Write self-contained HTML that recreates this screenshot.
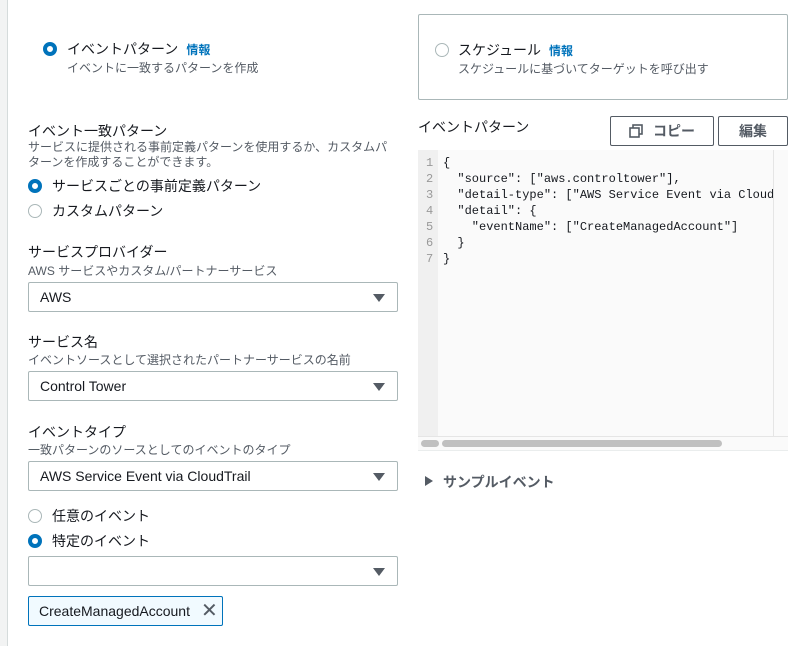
<!DOCTYPE html>
<html><head><meta charset="utf-8"><style>
body{margin:0;width:795px;height:646px;background:#fff;position:relative;overflow:hidden;font-family:"Liberation Sans","Noto Sans CJK JP",sans-serif;color:#16191f;}
.a{position:absolute;white-space:nowrap}
.t{font-size:14px}
.s{font-size:12px;color:#545b64}
.info{color:#0073bb;font-size:12px;font-weight:bold;margin-left:8px}
.rad{position:absolute;width:14px;height:14px;border-radius:50%;box-sizing:border-box}
.on{border:4px solid #0073bb;background:#fff}
.off{border:1px solid #aab7b8;background:#fff}
.sel{position:absolute;left:28px;width:370px;height:30px;border:1px solid #aab7b8;box-sizing:border-box;border-radius:2px;font-size:14px;line-height:28px;padding-left:11px}
.arr{position:absolute;right:12px;top:11px;width:0;height:0;border-left:6px solid transparent;border-right:6px solid transparent;border-top:8px solid #545b64}
.btn{position:absolute;top:116px;height:30px;border:1px solid #545b64;box-sizing:border-box;border-radius:2px;font-size:14px;font-weight:bold;color:#545b64;line-height:28px;text-align:center}
.code{font-family:"Liberation Mono",monospace;font-size:12px;line-height:16px;color:#16191f}
</style></head><body>
<div class="a" style="left:0;top:0;width:7px;height:646px;background:#f2f3f3;border-right:1px solid #d5dbdb"></div>

<div class="rad on" style="left:43px;top:42px"></div>
<div class="a t" style="left:67px;top:39px">イベントパターン<span class="info">情報</span></div>
<div class="a s" style="left:67px;top:59px">イベントに一致するパターンを作成</div>

<div class="a" style="left:418px;top:14px;width:370px;height:86px;border:1px solid #aab7b8;box-sizing:border-box;border-radius:2px"></div>
<div class="rad off" style="left:435px;top:43px"></div>
<div class="a t" style="left:458px;top:40px">スケジュール<span class="info">情報</span></div>
<div class="a s" style="left:458px;top:60px">スケジュールに基づいてターゲットを呼び出す</div>

<div class="a t" style="left:28px;top:121px">イベント一致パターン</div>
<div class="a s" style="left:28px;top:140px;line-height:15px">サービスに提供される事前定義パターンを使用するか、カスタムパ<br>ターンを作成することができます。</div>
<div class="rad on" style="left:28px;top:179px"></div>
<div class="a t" style="left:52px;top:176px">サービスごとの事前定義パターン</div>
<div class="rad off" style="left:28px;top:204px"></div>
<div class="a t" style="left:52px;top:201px">カスタムパターン</div>

<div class="a t" style="left:28px;top:242px">サービスプロバイダー</div>
<div class="a s" style="left:28px;top:262px">AWS サービスやカスタム/パートナーサービス</div>
<div class="sel" style="top:282px">AWS<div class="arr"></div></div>

<div class="a t" style="left:28px;top:332px">サービス名</div>
<div class="a s" style="left:28px;top:351px">イベントソースとして選択されたパートナーサービスの名前</div>
<div class="sel" style="top:371px">Control Tower<div class="arr"></div></div>

<div class="a t" style="left:28px;top:422px">イベントタイプ</div>
<div class="a s" style="left:28px;top:441px">一致パターンのソースとしてのイベントのタイプ</div>
<div class="sel" style="top:461px">AWS Service Event via CloudTrail<div class="arr"></div></div>

<div class="rad off" style="left:28px;top:509px"></div>
<div class="a t" style="left:52px;top:506px">任意のイベント</div>
<div class="rad on" style="left:28px;top:534px"></div>
<div class="a t" style="left:52px;top:531px">特定のイベント</div>
<div class="sel" style="top:556px"><div class="arr"></div></div>
<div class="a" style="left:28px;top:596px;width:195px;height:30px;border:1px solid #0073bb;box-sizing:border-box;border-radius:2px;background:#f1faff;font-size:14px;line-height:28px;padding-left:10px">CreateManagedAccount<span style="position:absolute;left:172px;top:0;font-size:20px;color:#545b64">✕</span></div>

<div class="a t" style="left:418px;top:117px">イベントパターン</div>
<div class="btn" style="left:610px;width:104px"><svg width="14" height="14" viewBox="0 0 14 14" style="position:relative;top:2px;margin-right:10px"><rect x="4" y="1" width="9" height="9" fill="none" stroke="#545b64" stroke-width="1.6"/><rect x="1" y="4" width="9" height="9" fill="#fff" stroke="#545b64" stroke-width="1.6"/></svg>コピー</div>
<div class="btn" style="left:718px;width:70px">編集</div>

<div class="a" style="left:418px;top:150px;width:370px;height:300px;background:#fafafa;border-bottom:1px solid #eaeded"></div>
<div class="a" style="left:418px;top:150px;width:20px;height:286px;background:#f0f0f0"></div>
<div class="a" style="left:773px;top:150px;width:1px;height:286px;background:#e5e5e5"></div>
<div class="a" style="left:418px;top:436px;width:370px;height:1px;background:#e5e5e5"></div>
<div class="a" style="left:421px;top:440px;width:18px;height:7px;border-radius:4px;background:#c0c0c0"></div>
<div class="a" style="left:442px;top:440px;width:280px;height:7px;border-radius:4px;background:#c0c0c0"></div>
<div class="a code" style="left:426px;top:155px;color:#999">1<br>2<br>3<br>4<br>5<br>6<br>7</div>
<div class="a code" style="left:443px;top:155px;white-space:pre;width:330px;overflow:hidden">{
  "source": ["aws.controltower"],
  "detail-type": ["AWS Service Event via CloudTrail"],
  "detail": {
    "eventName": ["CreateManagedAccount"]
  }
}</div>

<div class="a" style="left:425px;top:476px;width:0;height:0;border-top:5px solid transparent;border-bottom:5px solid transparent;border-left:8px solid #545b64"></div>
<div class="a t" style="left:443px;top:472px;font-weight:bold;color:#545b64">サンプルイベント</div>
</body></html>
